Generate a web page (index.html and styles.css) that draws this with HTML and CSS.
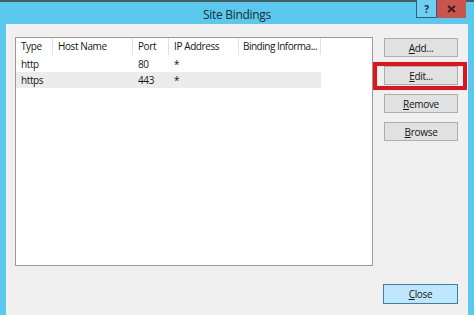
FILE: index.html
```html
<!DOCTYPE html>
<html lang="en">
  <head>
    <meta charset="UTF-8" />
    <title>Site Bindings</title>
    <link rel="stylesheet" href="styles.css">
  </head>
  <body>
    <div class="window">
      <div class="titlebar">
        <span class="title">Site Bindings</span>
        <div class="caption-buttons">
          <div class="cap-btn help">?</div>
          <div class="cap-btn close">
            <svg width="9" height="8" viewBox="0 0 9 8">
              <path d="M1 1 L8 7 M8 1 L1 7" stroke="#3a1a1a" stroke-width="1.8" />
            </svg>
          </div>
        </div>
      </div>

      <div class="client">
        <div class="main">
          <div class="list">
            <div class="row header">
              <div class="col c-type">Type</div>
              <div class="col c-host">Host Name</div>
              <div class="col c-port">Port</div>
              <div class="col c-ip">IP Address</div>
              <div class="col c-info">Binding Informa...</div>
            </div>
            <div class="row">
              <div class="col c-type">http</div>
              <div class="col c-host"></div>
              <div class="col c-port">80</div>
              <div class="col c-ip">*</div>
              <div class="col c-info"></div>
            </div>
            <div class="row selected">
              <div class="col c-type">https</div>
              <div class="col c-host"></div>
              <div class="col c-port">443</div>
              <div class="col c-ip">*</div>
              <div class="col c-info"></div>
            </div>
          </div>

          <div class="actions">
            <button class="btn"><u>A</u>dd...</button>
            <button class="btn highlighted"><u>E</u>dit...</button>
            <button class="btn"><u>R</u>emove</button>
            <button class="btn"><u>B</u>rowse</button>
          </div>
        </div>

        <div class="footer">
          <button class="btn btn-default"><u>C</u>lose</button>
        </div>
      </div>
    </div>
  </body>
</html>
```

FILE: styles.css
```css
:root {
  --frame: #5bc9ee;
  --client: #f0f0f0;
  --text: #161616;
}

body {
  margin: 0;
  width: 474px;
  height: 315px;
  overflow: hidden;
  font-family: "Open Sans", "Noto Sans", sans-serif;
  font-size: 10px;
  letter-spacing: -0.4px;
  color: var(--text);
}

.window {
  background: var(--frame);
  border-top: 2px solid #4a5a62;
  height: 313px;
  display: flex;
  flex-direction: column;
  padding: 0 6px 5px 6px;
}

.titlebar {
  height: 22px;
  position: relative;
  display: flex;
  justify-content: center;
  align-items: center;
}

.title {
  font-size: 12px;
  letter-spacing: -0.3px;
  color: #1d2a33;
  margin-top: 2px;
}

.caption-buttons {
  position: absolute;
  top: -2px;
  right: 2px;
  display: flex;
}

.cap-btn {
  height: 18px;
  display: flex;
  align-items: center;
  justify-content: center;
  box-sizing: border-box;
}

.cap-btn.help {
  width: 21px;
  border: 1px solid #2f5f78;
  border-top: none;
  background: #6fcff0;
  font-weight: bold;
  font-size: 10px;
  color: #1a2f45;
}

.cap-btn.close {
  width: 29px;
  background: #c8564f;
}

.client {
  flex: 1;
  background: var(--client);
  display: flex;
  flex-direction: column;
  padding: 13px 10px 11px 9px;
}

.main {
  display: flex;
  flex: 1;
}

.list {
  width: 356px;
  height: 227px;
  background: #fff;
  border: 1px solid #9a9a9a;
}

.row {
  display: flex;
  height: 16px;
  align-items: center;
}

.row.header {
  height: 17px;
  margin-bottom: 1px;
}

.row.selected {
  width: 305px;
  background: #ececec;
}

.col {
  box-sizing: border-box;
  padding-left: 5px;
  white-space: nowrap;
}

.header .col {
  border-right: 1px solid #e2e2e2;
  height: 17px;
  line-height: 17px;
}

.c-type { width: 37px; }
.c-host { width: 80px; }
.c-port { width: 36px; }
.c-ip { width: 70px; }
.c-info { width: 82px; padding-left: 4px; letter-spacing: -0.5px; }

.actions {
  margin-left: 11px;
  padding-top: 1px;
  display: flex;
  flex-direction: column;
  gap: 9px;
}

.btn {
  width: 74px;
  height: 19px;
  background: #e1e1e1;
  border: 1px solid #adadad;
  font-family: inherit;
  font-size: 10px;
  letter-spacing: -0.3px;
  color: var(--text);
  padding: 0;
  position: relative;
}

.btn.highlighted::after {
  content: "";
  position: absolute;
  left: -12px;
  right: -10px;
  top: -5px;
  bottom: -6px;
  border: 4px solid #e0141e;
}

.footer {
  display: flex;
  justify-content: flex-end;
  padding-top: 13px;
}

.btn-default {
  width: 75px;
  height: 20px;
  background: #bee6fd;
  border-color: #3c7fb1;
}
```
